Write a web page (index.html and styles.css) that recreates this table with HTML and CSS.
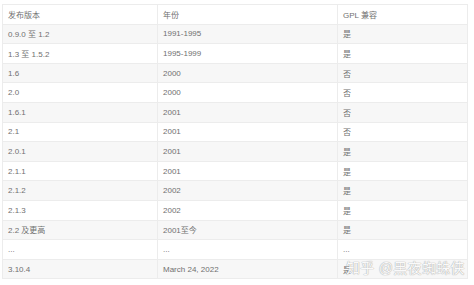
FILE: index.html
```html
<!DOCTYPE html>
<html lang="zh-CN">
<head>
  <meta charset="UTF-8">
  <title>Python 版本与 GPL 兼容</title>
  <link rel="stylesheet" href="styles.css">
</head>
<body>
  <div class="page">
    <table class="version-table">
      <colgroup>
        <col class="col-release">
        <col class="col-year">
        <col class="col-gpl">
      </colgroup>
      <thead>
        <tr><th>发布版本</th><th>年份</th><th>GPL 兼容</th></tr>
      </thead>
      <tbody>
        <tr><td>0.9.0 至 1.2</td><td>1991-1995</td><td>是</td></tr>
        <tr><td>1.3 至 1.5.2</td><td>1995-1999</td><td>是</td></tr>
        <tr><td>1.6</td><td>2000</td><td>否</td></tr>
        <tr><td>2.0</td><td>2000</td><td>否</td></tr>
        <tr><td>1.6.1</td><td>2001</td><td>否</td></tr>
        <tr><td>2.1</td><td>2001</td><td>否</td></tr>
        <tr><td>2.0.1</td><td>2001</td><td>是</td></tr>
        <tr><td>2.1.1</td><td>2001</td><td>是</td></tr>
        <tr><td>2.1.2</td><td>2002</td><td>是</td></tr>
        <tr><td>2.1.3</td><td>2002</td><td>是</td></tr>
        <tr><td>2.2 及更高</td><td>2001至今</td><td>是</td></tr>
        <tr><td>...</td><td>...</td><td>...</td></tr>
        <tr><td>3.10.4</td><td>March 24, 2022</td><td>是</td></tr>
      </tbody>
    </table>
    <div class="watermark">知乎 @黑夜蜘蛛侠</div>
  </div>
</body>
</html>
```

FILE: styles.css
```css
body {
  margin: 0;
  background-color: #fff;
  font-family: "Liberation Sans", "Noto Sans CJK SC", sans-serif;
}

.page {
  position: relative;
  padding: 4px 7px 0 2px;
}

.version-table {
  width: 465px;
  border-collapse: collapse;
  table-layout: fixed;
  border: 1px solid #ececec;
  font-size: 8px;
  color: #707070;
}

.col-release {
  width: 155px;
}

.col-year {
  width: 180px;
}

.col-gpl {
  width: 130px;
}

.version-table th,
.version-table td {
  height: 18.6px;
  padding: 0 5px;
  text-align: left;
  font-weight: normal;
  border-top: 1px solid #ececec;
  border-left: 1px solid #ececec;
  white-space: nowrap;
  vertical-align: middle;
}

.version-table tbody tr:nth-child(odd) {
  background-color: #f7f7f7;
}

/* site watermark laid over the table corner */
.watermark {
  position: absolute;
  left: 346px;
  top: 257px;
  font-size: 14px;
  color: #fafafa;
  text-shadow: 0 0 1px #a8a8a8, 0 0 1px #b0b0b0;
  letter-spacing: 0.3px;
  white-space: nowrap;
}
```
